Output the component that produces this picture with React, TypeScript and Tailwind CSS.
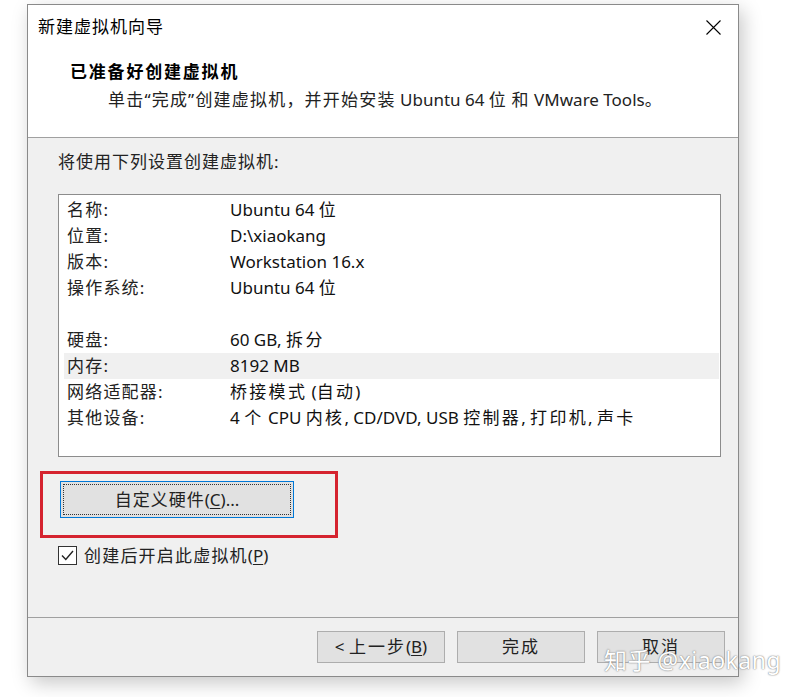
import React from 'react';

const ROWS = [
  { label: '名称:', value: 'Ubuntu 64 位' },
  { label: '位置:', value: 'D:\\xiaokang' },
  { label: '版本:', value: 'Workstation 16.x' },
  { label: '操作系统:', value: 'Ubuntu 64 位' },
  { label: '', value: '' },
  { label: '硬盘:', value: '60 GB, 拆分' },
  { label: '内存:', value: '8192 MB', selected: true },
  { label: '网络适配器:', value: '桥接模式 (自动)' },
  { label: '其他设备:', value: '4 个 CPU 内核, CD/DVD, USB 控制器, 打印机, 声卡' },
];

const FONT = "font-['Noto_Sans','Noto_Sans_CJK_SC',sans-serif]";

// the dialog's CJK glyphs run a bit wider than Noto's, so space out only those runs
function Cjk({ text, wide }: { text: string; wide?: boolean }) {
  const parts = text.split(/([\u4e00-\u9fff，。“”]+)/);
  return (
    <>
      {parts.map((p, i) =>
        i % 2 === 1 ? (
          <span key={i} className={wide ? 'tracking-[2.3px]' : 'tracking-[1.2px]'}>{p}</span>
        ) : (
          <span key={i}>{p}</span>
        )
      )}
    </>
  );
}

export default function App() {
  return (
    <div className={`relative w-[801px] h-[697px] bg-white pt-[4px] pl-[27px] overflow-hidden ${FONT} text-[17px] text-[#111]`}>
      {/* Dialog */}
      <div className="w-[712px] h-[673px] border border-[#8a8a8a] bg-white flex flex-col shadow-[4px_6px_18px_rgba(0,0,0,0.22)]">
        {/* Title bar */}
        <div className="h-[44px] flex items-center justify-between pl-[10px] pr-[17px] shrink-0">
          <span className="text-[17px] tracking-[1px] text-black">新建虚拟机向导</span>
          <svg width="15" height="15" viewBox="0 0 15 15" className="text-black">
            <path d="M0.5 0.5 L14.5 14.5 M14.5 0.5 L0.5 14.5" stroke="currentColor" strokeWidth="1.1" fill="none" />
          </svg>
        </div>

        {/* Header */}
        <div className="h-[89px] shrink-0 border-b border-[#a0a0a0] pt-[10px]">
          <p className="pl-[42px] h-[26px] leading-[26px] font-bold text-[17px] tracking-[1.8px] text-black">已准备好创建虚拟机</p>
          <p className="pl-[80px] mt-[1px] h-[28px] leading-[28px] text-[17px] text-[#222] whitespace-nowrap">
            <Cjk text="单击“完成”创建虚拟机，并开始安装" /> Ubuntu 64 <Cjk text="位" /> <Cjk text="和" /> VMware Tools<Cjk text="。" />
          </p>
        </div>

        {/* Body */}
        <div className="flex-1 bg-[#f0f0f0] pt-[12px] pl-[30px] pr-[17px] flex flex-col">
          <p className="h-[24px] leading-[24px] text-[#222] tracking-[1px]">将使用下列设置创建虚拟机:</p>

          <div className="mt-[20px] h-[263px] border border-[#8c8c8c] bg-white pt-[2px] pl-[5px] pr-[1px]">
            {ROWS.map((r, i) => (
              <div key={i} className={`h-[26px] flex items-center pl-[3px] ${r.selected ? 'bg-[#f0f0f0]' : ''}`}>
                <span className="w-[163px] shrink-0 text-[#222]"><Cjk text={r.label} /></span>
                <span className="text-[#111] whitespace-nowrap"><Cjk text={r.value} wide /></span>
              </div>
            ))}
          </div>

          {/* Highlighted customise button */}
          <div className="mt-[14px] -ml-[18px] w-[298px] h-[67px] border-[3px] border-[#d5232f] pt-[7px] pl-[17px]">
            <button className="w-[234px] h-[37px] bg-[#e1e1e1] border border-[#0078d7] p-[2px]">
              <div className="w-full h-full border border-dotted border-[#333] flex items-center justify-center text-[#222]">
                <span className="tracking-[1px]">自定义硬件</span>(<span className="underline underline-offset-2">C</span>)...
              </div>
            </button>
          </div>

          {/* Checkbox */}
          <label className="mt-[8px] flex items-center gap-[7px] h-[19px]">
            <span className="w-[19px] h-[19px] border border-[#333] bg-white flex items-center justify-center">
              <svg width="15" height="15" viewBox="0 0 15 15">
                <path d="M2 7.5 L5.8 11.5 L13 3" stroke="#222" strokeWidth="1.4" fill="none" />
              </svg>
            </span>
            <span className="text-[#222]">
              <span className="tracking-[1.2px]">创建后开启此虚拟机</span>(<span className="underline underline-offset-2">P</span>)
            </span>
          </label>
        </div>

        {/* Footer */}
        <div className="h-[59px] shrink-0 bg-[#f0f0f0] border-t border-[#a0a0a0] pt-[13px] pr-[13px] flex justify-end gap-[12px]">
          <button className="w-[128px] h-[32px] bg-[#e1e1e1] border border-[#adadad] text-[#222]">
            &lt; <span className="tracking-[2px]">上一步</span>(<span className="underline underline-offset-2">B</span>)
          </button>
          <button className="w-[128px] h-[32px] bg-[#e1e1e1] border border-[#adadad] text-[#222] tracking-[2px]">完成</button>
          <button className="w-[128px] h-[32px] bg-[#e1e1e1] border border-[#adadad] text-[#222] tracking-[2px]">取消</button>
        </div>
      </div>

      {/* Watermark */}
      <div className="absolute left-[604px] top-[645px] text-[23px] leading-[30px] text-white tracking-[0.5px] [text-shadow:0_0_1px_#777,0_0_2px_#999]">
        知乎 @xiaokang
      </div>
    </div>
  );
}
